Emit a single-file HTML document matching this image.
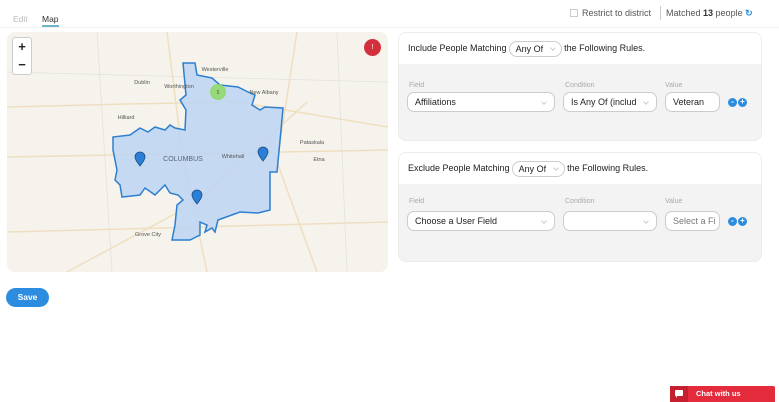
<!DOCTYPE html>
<html><head><style>
body{margin:0;width:779px;height:402px;background:#fff;font-family:"Liberation Sans",sans-serif;position:relative;overflow:hidden;color:#333}
.abs{position:absolute}
.tab{font-size:8.5px;top:14px}
.card{position:absolute;left:398px;width:362px;border-radius:8px;background:#f3f3f3;border:1px solid #ececec;overflow:hidden}
.card .hd{background:#fff;height:31px;font-size:9px;line-height:31px;padding-left:9px;color:#222}
.pill{display:inline-block;position:relative;border:1px solid #ccc;border-radius:9px;height:14px;line-height:14px;padding:0 18px 0 6px;margin:0 2px;font-size:9px;vertical-align:middle;background:#fff}
.pill:after,.sel:after{content:"";position:absolute;right:6px;top:4px;width:3px;height:3px;border-right:1px solid #ccc;border-bottom:1px solid #ccc;transform:rotate(45deg)}
.sel:after{top:7px;right:8px}
.lbl{position:absolute;font-size:7px;color:#aaa}
.in{position:absolute;height:20px;border:1px solid #ccc;border-radius:7px;background:#fff;font-size:9px;line-height:19px;padding-left:7px;box-sizing:border-box;color:#222}
.dot{position:absolute;width:9px;height:9px;border-radius:50%;background:#2c8de0;color:#fff;font-size:8px;line-height:8px;text-align:center;font-weight:bold}
</style></head><body>
<div class="abs tab" style="left:13px;color:#bbb">Edit</div>
<div class="abs tab" style="left:42px;color:#333">Map</div>
<div class="abs" style="left:42px;top:25px;width:17px;height:2px;background:#6fb4c9"></div>
<div class="abs" style="left:0;top:27px;width:779px;height:1px;background:#f0f0f0"></div>
<div class="abs" style="left:570px;top:9px;width:6px;height:6px;border:1px solid #ccc"></div>
<div class="abs" style="left:582px;top:8px;font-size:9px;color:#555">Restrict to district</div>
<div class="abs" style="left:660px;top:6px;width:1px;height:14px;background:#ccc"></div>
<div class="abs" style="left:666px;top:8px;font-size:9px;color:#555">Matched <b style="color:#333">13</b> people <span style="color:#2c8de0;font-weight:bold">&#x21bb;</span></div>

<div class="abs" style="left:7px;top:32px;width:381px;height:240px;border-radius:8px;background:#f6f3ec;overflow:hidden">
<svg width="381" height="240" style="position:absolute;left:0;top:0">
<g fill="none" stroke="#efdfc0" stroke-width="1.5">
<path d="M0 75 L120 72 L230 70 L381 95"/><path d="M0 125 L381 118"/><path d="M60 240 L190 170 L300 70"/><path d="M160 0 L175 120 L200 240"/><path d="M290 0 L270 130 L310 240"/><path d="M0 200 L381 190"/>
</g>
<g fill="none" stroke="#e2e2e2" stroke-width="0.8"><path d="M90 0 L105 240"/><path d="M330 0 L340 240"/><path d="M0 40 L381 50"/></g>
<path transform="translate(-7,-32)" fill="#bcd5f3" fill-opacity="0.85" stroke="#2d7fd0" stroke-width="1.5" d="M183 63 L195 63 L197 75 L212 78 L220 85 L238 87 L248 92 L255 95 L252 105 L260 110 L265 107 L283 108 L281 130 L277 172 L270 172 L270 210 L258 213 L240 212 L218 220 L215 232 L212 228 L205 232 L207 225 L200 222 L200 235 L190 240 L172 240 L175 225 L177 205 L183 200 L178 195 L170 193 L165 185 L160 190 L155 195 L145 188 L140 195 L122 197 L120 185 L115 180 L117 170 L113 150 L113 137 L130 135 L140 128 L148 132 L155 127 L165 130 L170 125 L175 128 L185 130 L186 110 L180 100 L186 95 Z"/>
<g font-size="5.5" fill="#555" text-anchor="middle">
<text x="208" y="39">Westerville</text><text x="135" y="52">Dublin</text><text x="172" y="56">Worthington</text><text x="257" y="62">New Albany</text><text x="119" y="87">Hilliard</text><text x="305" y="112">Pataskala</text><text x="312" y="129">Etna</text><text x="141" y="204">Grove City</text><text x="226" y="126">Whitehall</text>
<text x="176" y="129" font-size="7" fill="#567">COLUMBUS</text></g>
<circle cx="211" cy="60" r="8" fill="#8fd86a" opacity="0.9"/><text x="211" y="62" font-size="5" text-anchor="middle" fill="#555">5</text>
<g fill="#2c7fd6" stroke="#1a4d80" stroke-width="0.8">
<path d="M133 134 c-4 -5 -5 -7 -5 -9 a5 5 0 0 1 10 0 c0 2 -1 4 -5 9z"/>
<path d="M256 129 c-4 -5 -5 -7 -5 -9 a5 5 0 0 1 10 0 c0 2 -1 4 -5 9z"/>
<path d="M190 172 c-4 -5 -5 -7 -5 -9 a5 5 0 0 1 10 0 c0 2 -1 4 -5 9z"/>
</g>
</svg>
<div class="abs" style="left:5px;top:5px;width:18px;height:36px;background:#fff;border:1px solid #ccc;border-radius:3px;font-size:13px;text-align:center;line-height:18px;font-weight:bold;color:#222">+<br>&minus;</div>
<div class="abs" style="left:357px;top:7px;width:17px;height:17px;border-radius:50%;background:#d3303d;color:#fff;font-size:7px;text-align:center;line-height:17px">!</div>
</div>

<div class="card" style="top:32px;height:107px">
<div class="hd">Include People Matching<span class="pill">Any Of</span>the Following Rules.</div>
<div class="lbl" style="left:10px;top:49px">Field</div><div class="lbl" style="left:166px;top:49px">Condition</div><div class="lbl" style="left:266px;top:49px">Value</div>
<div class="in sel" style="left:8px;top:59px;width:148px">Affiliations</div>
<div class="in sel" style="left:164px;top:59px;width:94px">Is Any Of (includ</div>
<div class="in" style="left:266px;top:59px;width:55px">Veteran</div>
<div class="dot" style="left:329px;top:65px">-</div><div class="dot" style="left:339px;top:65px">+</div>
</div>

<div class="card" style="top:152px;height:108px">
<div class="hd">Exclude People Matching<span class="pill">Any Of</span>the Following Rules.</div>
<div class="lbl" style="left:10px;top:45px">Field</div><div class="lbl" style="left:166px;top:45px">Condition</div><div class="lbl" style="left:266px;top:45px">Value</div>
<div class="in sel" style="left:8px;top:58px;width:148px">Choose a User Field</div>
<div class="in sel" style="left:164px;top:58px;width:94px"></div>
<div class="in" style="left:266px;top:58px;width:55px;color:#777">Select a Fi</div>
<div class="dot" style="left:329px;top:64px">-</div><div class="dot" style="left:339px;top:64px">+</div>
</div>

<div class="abs" style="left:6px;top:288px;width:43px;height:19px;border-radius:10px;background:#2c8de0;color:#fff;font-size:8.5px;font-weight:bold;text-align:center;line-height:19px">Save</div>
<div class="abs" style="left:670px;top:386px;width:105px;height:16px;background:#e32b3c;border-radius:2px 2px 0 0;color:#fff;font-size:7.5px;font-weight:bold;line-height:16px"><span style="display:inline-block;width:18px;height:16px;background:#c61f2f;vertical-align:top;position:relative"><span style="position:absolute;left:5px;top:4px;width:8px;height:6px;background:#fff;border-radius:1px"></span><span style="position:absolute;left:6px;top:9px;width:0;height:0;border-left:2px solid #fff;border-bottom:3px solid transparent"></span></span><span style="margin-left:8px">Chat with us</span></div>
</body></html>
